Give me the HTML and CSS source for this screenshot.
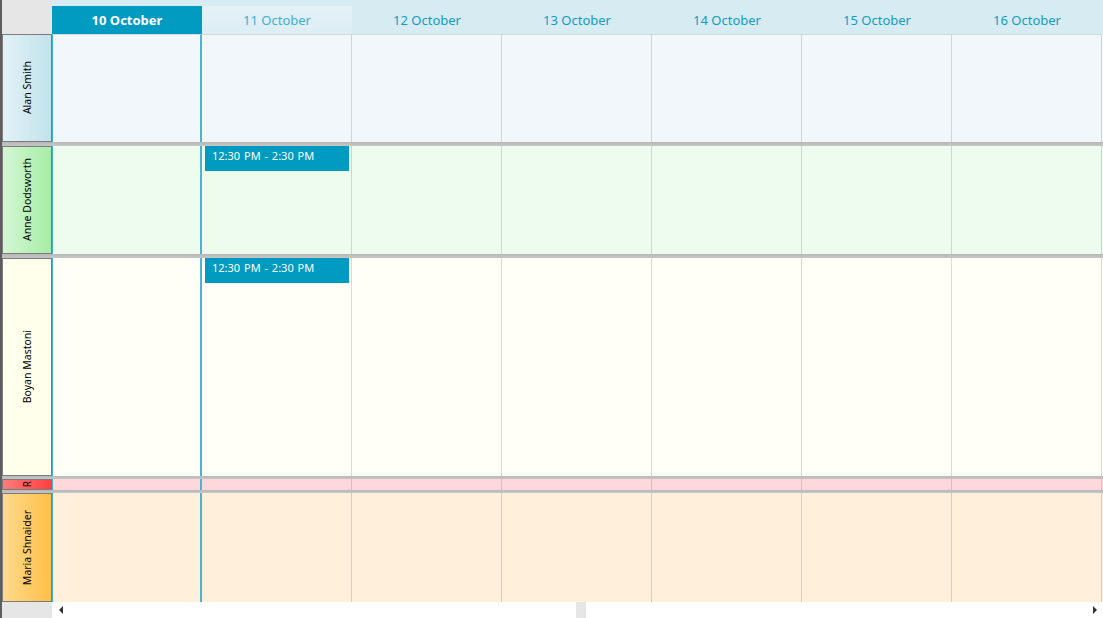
FILE: index.html
```html
<!DOCTYPE html>
<html>
<head>
<meta charset="utf-8">
<link rel="stylesheet" href="styles.css">
</head>
<body>
<div class="app">
  <div class="head">
    <div class="corner"></div>
    <div class="days">
      <div class="day today">10 October</div>
      <div class="day hover">11 October</div>
      <div class="day">12 October</div>
      <div class="day">13 October</div>
      <div class="day">14 October</div>
      <div class="day">15 October</div>
      <div class="day">16 October</div>
    </div>
  </div>

  <div class="row alan first">
    <div class="rh"><span>Alan Smith</span></div>
    <div class="cells">
      <div class="cell c1"></div><div class="cell"></div><div class="cell"></div><div class="cell"></div><div class="cell"></div><div class="cell"></div><div class="cell"></div>
    </div>
  </div>
  <div class="sep s4"></div>

  <div class="row anne">
    <div class="rh"><span>Anne Dodsworth</span></div>
    <div class="cells">
      <div class="cell c1"></div><div class="cell"><div class="appt">12:30 PM - 2:30 PM</div></div><div class="cell"></div><div class="cell"></div><div class="cell"></div><div class="cell"></div><div class="cell"></div>
    </div>
  </div>
  <div class="sep s4"></div>

  <div class="row boyan">
    <div class="rh"><span>Boyan Mastoni</span></div>
    <div class="cells">
      <div class="cell c1"></div><div class="cell"><div class="appt">12:30 PM - 2:30 PM</div></div><div class="cell"></div><div class="cell"></div><div class="cell"></div><div class="cell"></div><div class="cell"></div>
    </div>
  </div>
  <div class="sep s3"></div>

  <div class="row rrow">
    <div class="rh"><span>R</span></div>
    <div class="cells">
      <div class="cell c1"></div><div class="cell"></div><div class="cell"></div><div class="cell"></div><div class="cell"></div><div class="cell"></div><div class="cell"></div>
    </div>
  </div>
  <div class="sep s3"></div>

  <div class="row maria">
    <div class="rh"><span>Maria Shnaider</span></div>
    <div class="cells">
      <div class="cell c1"></div><div class="cell"></div><div class="cell"></div><div class="cell"></div><div class="cell"></div><div class="cell"></div><div class="cell"></div>
    </div>
  </div>

  <div class="scroll">
    <div class="scorner"></div>
    <div class="track">
      <span class="arrow left"></span>
      <span class="thumb"></span>
      <span class="fill"></span>
      <span class="arrow right"></span>
    </div>
  </div>
</div>
</body>
</html>
```

FILE: styles.css
```css
html, body {
  margin: 0;
  padding: 0;
}
body {
  width: 1103px;
  height: 618px;
  overflow: hidden;
  background: #ffffff;
  font-family: "Noto Sans", "Open Sans", sans-serif;
}
.app {
  display: flex;
  flex-direction: column;
  height: 618px;
  border-left: 2px solid #5e5e5e;
  box-sizing: border-box;
}
.head {
  display: flex;
  height: 34px;
  flex: none;
}
.corner {
  width: 50px;
  flex: none;
  background: #e6e6e6;
}
.days {
  flex: 1;
  display: flex;
  background: #d7ebf3;
  padding-top: 6px;
  overflow: hidden;
}
.day {
  width: 150px;
  flex: none;
  display: flex;
  align-items: center;
  justify-content: center;
  font-size: 13px;
  color: #129cc4;
}
.day.today {
  background: #019ac0;
  color: #ffffff;
  font-weight: bold;
}
.day.hover {
  background: linear-gradient(#e4f2f7, #dcedf4);
  color: #3cb0d2;
}
.row {
  display: flex;
  flex: none;
}
.rh {
  width: 50px;
  flex: none;
  box-sizing: border-box;
  border: 1px solid #7b7b7b;
  display: flex;
  align-items: center;
  justify-content: center;
  font-size: 10.5px;
  color: #000;
}
.rh span {
  writing-mode: vertical-rl;
  transform: rotate(180deg);
  white-space: nowrap;
  line-height: 12px;
}
.cells {
  flex: 1;
  display: flex;
  overflow: hidden;
}
.cell {
  width: 150px;
  flex: none;
  box-sizing: border-box;
  border-right: 1px solid rgba(0, 0, 0, 0.14);
}
.cell.c1 {
  border-left: 1px solid #3fb2d4;
  border-right: 2px solid #4ab4d4;
}
.first .cell {
  border-top: 1px solid #d2dade;
}
.alan { height: 108px; }
.alan .cells { background: #f2f7fb; }
.alan .rh { background: linear-gradient(to right, #e2f1f7, #c2e2ec); }

.anne { height: 108px; }
.anne .cells { background: #eefcee; }
.anne .rh { background: linear-gradient(to right, #d4f6d4, #a6eda6); }

.boyan { height: 218px; }
.boyan .cells { background: #fffff8; }
.boyan .rh { background: #ffffec; }

.rrow { height: 11px; }
.rrow .cells { background: #ffd8dc; }
.rrow .rh { background: linear-gradient(to right, #ff7b7b, #ff3f3f); }
.rrow .rh span { font-size: 10px; line-height: 10px; }

.maria { height: 109px; }
.maria .cells { background: #ffefdb; }
.maria .rh { background: linear-gradient(to right, #ffda8e, #ffbf48); }

.sep {
  flex: none;
  background: linear-gradient(#b8b8b8, #c6c6c6);
}
.s4 { height: 4px; }
.s3 { height: 3px; }

.appt {
  margin: 0 2px 0 3px;
  height: 25px;
  box-sizing: border-box;
  background: #019ac0;
  color: #ffffff;
  font-size: 11px;
  line-height: 14px;
  padding: 3px 0 0 7px;
  white-space: pre;
  word-spacing: 1px;
}

.scroll {
  display: flex;
  height: 16px;
  flex: none;
}
.scorner {
  width: 50px;
  flex: none;
  background: #e6e6e6;
}
.track {
  flex: 1;
  display: flex;
  align-items: center;
  background: #ffffff;
  padding: 0 6px 0 7px;
  height: 16px;
}
.arrow {
  width: 0;
  height: 0;
  border-top: 4px solid transparent;
  border-bottom: 4px solid transparent;
}
.arrow.left {
  border-right: 4px solid #333;
}
.arrow.right {
  border-left: 4px solid #333;
}
.thumb {
  width: 10px;
  height: 16px;
  background: #e6e6e6;
  margin-left: 513px;
}
.fill {
  flex: 1;
}
```
